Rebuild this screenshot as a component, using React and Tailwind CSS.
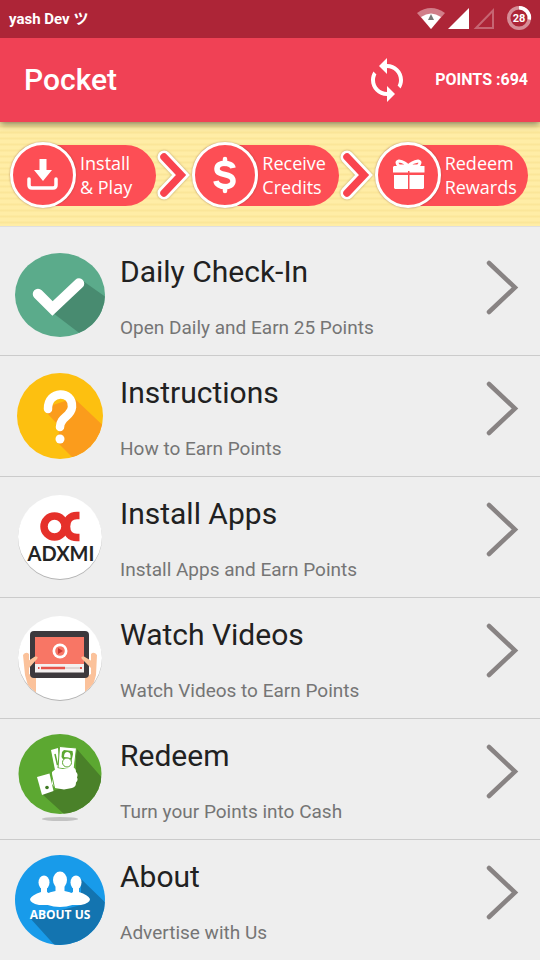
import React from "react";

function CheckIcon() {
  return (
    <svg viewBox="0 0 90 90" className="size-full" aria-hidden="true">
      <clipPath id="check-clip"><ellipse cx="45" cy="45" rx="45" ry="42" /></clipPath>
      <ellipse cx="45" cy="45" rx="45" ry="42" fill="#5bab8b" />
      <path clipPath="url(#check-clip)" d="M38 63 L68 31 L95 50 V95 H80Z" fill="#488b70" />
      <path d="M23 44 L37.500 58.500 L64 33.500" fill="none" stroke="#fff" strokeWidth="10.500" strokeLinecap="round" />
    </svg>
  );
}

function QuestionIcon() {
  return (
    <svg viewBox="0 0 90 90" className="size-full" aria-hidden="true">
      <clipPath id="question-clip"><circle cx="45" cy="45" r="43" /></clipPath>
      <circle cx="45" cy="45" r="43" fill="#fdc010" />
      <path clipPath="url(#question-clip)" d="M59 27 L95 61 V95 H66 L42 71 L45 56 L31 41 L38 34Z" fill="#fb9c1c" />
      <path d="M33 38 C32.500 19 58 19 57 36 C56 46 45 46 45 56" fill="none" stroke="#fff" strokeWidth="8.500" strokeLinecap="round" />
      <circle cx="45" cy="68" r="4.500" fill="#fff" />
    </svg>
  );
}

function AdxmiIcon() {
  return (
    <svg viewBox="0 0 90 90" className="size-full" aria-hidden="true">
      <circle cx="45" cy="46" r="42" fill="#b5b5b5" />
      <circle cx="45" cy="45" r="42" fill="#fff" />
      <circle cx="39.500" cy="34.500" r="10.500" fill="none" stroke="#e5302a" strokeWidth="7.500" />
      <path d="M64.500 23.500 H62 C55 23.500 51.500 28 51.500 34.500 C51.500 41 55 45.500 62 45.500 H64.500" fill="none" stroke="#e5302a" strokeWidth="7.500" />
      <text x="46" y="69" textAnchor="middle" className="font-['Lato',sans-serif] text-[20px] font-bold" fill="#242424">ADXMI</text>
    </svg>
  );
}

function VideoIcon() {
  return (
    <svg viewBox="0 0 90 90" className="size-full" aria-hidden="true">
      <clipPath id="video-clip"><circle cx="45" cy="45" r="42" /></clipPath>
      <circle cx="45" cy="46" r="42" fill="#b5b5b5" />
      <circle cx="45" cy="45" r="42" fill="#fff" />
      <g clipPath="url(#video-clip)">
        <path d="M8 42 Q11 38 14 41 V61 L21 64 V80 H15 L10 62Z" fill="#fbc29b" />
        <path d="M82 42 Q79 38 76 41 V61 L70 64 V80 H76 L81 62Z" fill="#fbc29b" />
      </g>
      <rect x="15" y="18" width="59" height="47" rx="4" fill="#3d393d" />
      <rect x="20" y="24" width="49" height="28" fill="#f87665" />
      <rect x="20" y="51" width="49" height="8.500" fill="#f4f0f0" />
      <path d="M26 55 H50" stroke="#e5524a" strokeWidth="2.500" />
      <path d="M50 55 H65" stroke="#ded6d6" strokeWidth="2" />
      <path d="M23 55h1.500M65 55h2" stroke="#e5524a" strokeWidth="2" />
      <circle cx="45" cy="38" r="7.500" fill="#fff" />
      <circle cx="45" cy="38" r="4.800" fill="#f87665" />
      <path d="M43 35 L48 38 L43 41Z" fill="#c63a37" />
      <path d="M10 50 L20 43.500 Q24 43 22 46 L14 55Z M80 50 L69 43.500 Q65 43 67 46 L76 55Z" fill="#fbc29b" />
    </svg>
  );
}

function RedeemIcon() {
  return (
    <svg viewBox="0 0 90 90" className="size-full" aria-hidden="true">
      <clipPath id="redeem-clip"><ellipse cx="45" cy="40" rx="41.500" ry="40" /></clipPath>
      <ellipse cx="45" cy="85" rx="18" ry="2" fill="#c2c2c2" />
      <ellipse cx="45" cy="40" rx="41.500" ry="40" fill="#5ca831" />
      <path clipPath="url(#redeem-clip)" d="M61 14 L95 53 V90 H60 L27 60 L61 50Z" fill="#4a8129" />
      <path d="M36 16 L43 14 L45 34 L40 36Z" fill="#fff" />
      <path d="M40 20 L42.500 31" stroke="#5ca831" strokeWidth="1.500" />
      <path d="M44.500 12.500 L61.500 14 L59 36 L43 34Z" fill="#fff" stroke="#5ca831" />
      <path d="M49 16 L57.500 17 L58 20 L56.500 27 L48.500 26 L46.500 23 L47 18Z" fill="#5ca831" />
      <path d="M49 23 Q49 18 52.500 18 Q56 18 55.500 24Z" fill="#fff" />
      <circle cx="52" cy="28.500" r="4.500" fill="#fff" stroke="#5ca831" />
      <path d="M37 38 L42 34 L48 35 L58 33.500 Q61 34 61 38 Q63.500 40 62 43.500 Q63.500 46 61 48.500 Q61 53 57 54 L49 55.500 L40 54 L37 50Z" fill="#fff" />
      <path d="M22 43 L34.500 39.500 L38.500 57 L27 61Z" fill="#fff" />
      <path d="M36.500 40 L39.500 54" stroke="#5ca831" strokeWidth="1" />
      <circle cx="32" cy="53.500" r="1.800" fill="#3f7a24" />
    </svg>
  );
}

function AboutIcon() {
  return (
    <svg viewBox="0 0 90 90" className="size-full" aria-hidden="true">
      <clipPath id="about-clip"><circle cx="45" cy="45" r="45" /></clipPath>
      <circle cx="45" cy="45" r="45" fill="#189bea" />
      <path clipPath="url(#about-clip)" d="M66 24 L95 52 V95 H44 L15 63 L66 50Z" fill="#1374b0" />
      <g fill="#fff">
        <ellipse cx="29" cy="27.500" rx="5.500" ry="7" />
        <ellipse cx="61" cy="27.500" rx="5.500" ry="7" />
        <path d="M26 32 h6 v5 l8 5 v8 H24 Q15 48 15 44 Q17 40 26 37Z" />
        <path d="M64 32 h-6 v5 l-8 5 v8 H66 Q75 48 75 44 Q73 40 64 37Z" />
      </g>
      <path d="M40.500 29 V36 Q29 38 26 45 Q31 52 45 52 Q59 52 64 45 Q61 38 49.500 36 V29Z" fill="#fff" />
      <ellipse cx="45" cy="25" rx="7" ry="8.500" fill="#fff" />
      <text x="45" y="64" textAnchor="middle" className="font-['Open_Sans',sans-serif] text-[12px] font-bold" fill="#fff">ABOUT US</text>
    </svg>
  );
}

const items = [
  { title: "Daily Check-In", text: "Open Daily and Earn 25 Points", Icon: CheckIcon },
  { title: "Instructions", text: "How to Earn Points", Icon: QuestionIcon },
  { title: "Install Apps", text: "Install Apps and Earn Points", Icon: AdxmiIcon },
  { title: "Watch Videos", text: "Watch Videos to Earn Points", Icon: VideoIcon },
  { title: "Redeem", text: "Turn your Points into Cash", Icon: RedeemIcon },
  { title: "About", text: "Advertise with Us", Icon: AboutIcon },
];

function StatusBar() {
  return (
    <div className="relative z-20 flex h-[38px] items-center justify-between bg-[#ad2537] pr-2 pl-[9px] text-white">
      <span className="text-[15px] leading-5 font-bold">yash Dev ツ</span>
      <svg viewBox="0 0 116 38" className="h-[38px] w-[116px]" role="img" aria-label="Wi-Fi, signal, battery 28">
        <path d="M1 13 Q15 3 29 13 L15 29Z" fill="#d17e89" />
        <path d="M5 17 Q15 10 25 17 L15 29Z" fill="#fff" />
        <path d="M15 14 L18 20 H12Z" fill="#777" />
        <path d="M32 29 L53 8 V29Z" fill="#fff" />
        <path d="M60 28 L77 10.500 V28Z" fill="none" stroke="#c66572" strokeWidth="2" />
        <circle cx="103" cy="18" r="10.300" fill="none" stroke="#d68d97" strokeWidth="3.500" />
        <path d="M103 7.700 A10.300 10.300 0 0 1 113.300 19.500" fill="none" stroke="#fff" strokeWidth="3.500" />
        <text x="103" y="22" textAnchor="middle" className="text-[11px] font-bold" fill="#fff">28</text>
      </svg>
    </div>
  );
}

function AppBar() {
  return (
    <header className="relative z-10 flex h-[84px] items-center bg-[#f04155] pr-3 pl-6 text-white shadow-[0_2px_7px_rgba(0,0,0,0.5)]">
      <h1 className="flex-1 text-[30px] leading-9 font-medium">Pocket</h1>
      <button type="button" aria-label="Refresh" className="mr-6 size-12">
        <svg viewBox="0 0 24 24" className="size-12" fill="currentColor" aria-hidden="true">
          <path d="M12 4V1L8 5l4 4V6c3.310 0 6 2.690 6 6 0 1.010-.25 1.970-.7 2.800l1.460 1.460C19.540 15.030 20 13.570 20 12c0-4.420-3.580-8-8-8zm0 14c-3.310 0-6-2.690-6-6 0-1.010.25-1.970.7-2.800L5.240 7.740C4.460 8.970 4 10.430 4 12c0 4.420 3.580 8 8 8v3l4-4-4-4v3z" />
        </svg>
      </button>
      <span className="text-base font-bold">POINTS :694</span>
    </header>
  );
}

function DownloadGlyph() {
  return (
    <svg viewBox="0 0 66 66" className="size-[66px] shrink-0" aria-hidden="true">
      <path d="M29.500 17 h7 v11 h5.500 L33 39 L24 28 h5.500Z" fill="#fff" />
      <path d="M19 37 V43 Q19 46 22 46 H43 Q46 46 46 43 V37" fill="none" stroke="#fff" strokeWidth="3.500" strokeLinecap="round" />
    </svg>
  );
}

function DollarGlyph() {
  return (
    <svg viewBox="0 0 66 66" className="size-[66px] shrink-0" aria-hidden="true">
      <path d="M41 26 C40 20 25 19 25 27 C25 35 41 30 41 39 C41 47 25 46 24 39" fill="none" stroke="#fff" strokeWidth="5.500" />
      <path d="M33 17 V22 M33 44 V49" stroke="#fff" strokeWidth="4.500" strokeLinecap="round" />
    </svg>
  );
}

function GiftGlyph() {
  return (
    <svg viewBox="0 0 66 66" className="size-[66px] shrink-0" aria-hidden="true">
      <path d="M33 24 L24 24 Q20 20 24 19 Q30 20 33 24 Q37 20 43 19 Q47 20 43 24Z" fill="none" stroke="#fff" strokeWidth="3" />
      <path d="M19 24 H49.500 V30.500 H34.500 V29 H33 V30.500 H18V25Z M19 33 H33 V47 H20 L19 46Z M34.500 33 H49 V46 L48 47 H34.500Z" fill="#fff" />
    </svg>
  );
}

function Step({ first, second, wide, children }) {
  return (
    <li className={wide ? "flex shrink-0 grow basis-[153px] items-center" : "flex shrink-0 grow basis-[146px] items-center"}>
      <span className="z-10 flex size-[66px] shrink-0 items-center justify-center rounded-full border-[3px] border-white bg-[#fd4e55] shadow-[0_0_2px_rgba(120,60,40,0.6)]">
        {children}
      </span>
      <span className="-ml-8 flex h-[61px] flex-1 flex-col justify-center rounded-r-full bg-[#fd4e55] pl-9 font-['Open_Sans','Noto_Sans',sans-serif] text-[18px] leading-6 whitespace-nowrap text-white">
        <span>{first}</span>
        <span>{second}</span>
      </span>
    </li>
  );
}

function StepArrow() {
  return (
    <li aria-hidden="true" className="w-9 shrink-0">
      <svg viewBox="0 0 36 56" className="h-14 w-9 drop-shadow-[0_0_1px_rgba(120,90,40,0.5)]" fill="none" strokeLinecap="round">
        <path d="M8 10 L25 28 L8 46" stroke="#fff" strokeWidth="13" />
        <path d="M8 10 L25 28 L8 46" stroke="#f9444f" strokeWidth="7.500" />
      </svg>
    </li>
  );
}

function Banner() {
  return (
    <ol className="flex h-[104px] items-center bg-[#ffeda6] bg-[repeating-linear-gradient(#ffeda6_0px,#ffeda6_3px,#fbe699_4px,#fbe699_5px,#ffeda6_6px)] pt-0.5 pr-3 pl-[10px]">
      <Step first="Install" second="& Play"><DownloadGlyph /></Step>
      <StepArrow />
      <Step first="Receive" second="Credits"><DollarGlyph /></Step>
      <StepArrow />
      <Step first="Redeem" second="Rewards" wide><GiftGlyph /></Step>
    </ol>
  );
}

function MenuRow({ title, text, Icon }) {
  return (
    <li className="border-b border-[#cbcbcb] last:border-b-0">
      <a href="#" className="flex h-[120px] items-start py-[15px] pr-5 pl-[15px]">
        <span className="size-[90px] shrink-0"><Icon /></span>
        <span className="flex min-w-0 flex-1 flex-col gap-[26px] pl-[15px]">
          <span className="pt-1 text-[30px] leading-9 text-[#212121]">{title}</span>
          <span className="text-[19px] leading-6 text-[#757575]">{text}</span>
        </span>
        <svg viewBox="0 0 36 60" className="mt-2 h-[60px] w-9 shrink-0" aria-hidden="true">
          <path d="M5 5 L31 29.500 L5 54" fill="none" stroke="#888383" strokeWidth="4.500" strokeLinecap="round" />
        </svg>
      </a>
    </li>
  );
}

export default function App() {
  return (
    <div className="min-h-screen bg-[#eeeeee] font-['Roboto','Noto_Sans_CJK_JP',sans-serif]">
      <StatusBar />
      <AppBar />
      <main>
        <Banner />
        <ul className="border-t border-[#dfdfdf] pt-2">
          {items.map((item) => <MenuRow key={item.title} {...item} />)}
        </ul>
      </main>
    </div>
  );
}
